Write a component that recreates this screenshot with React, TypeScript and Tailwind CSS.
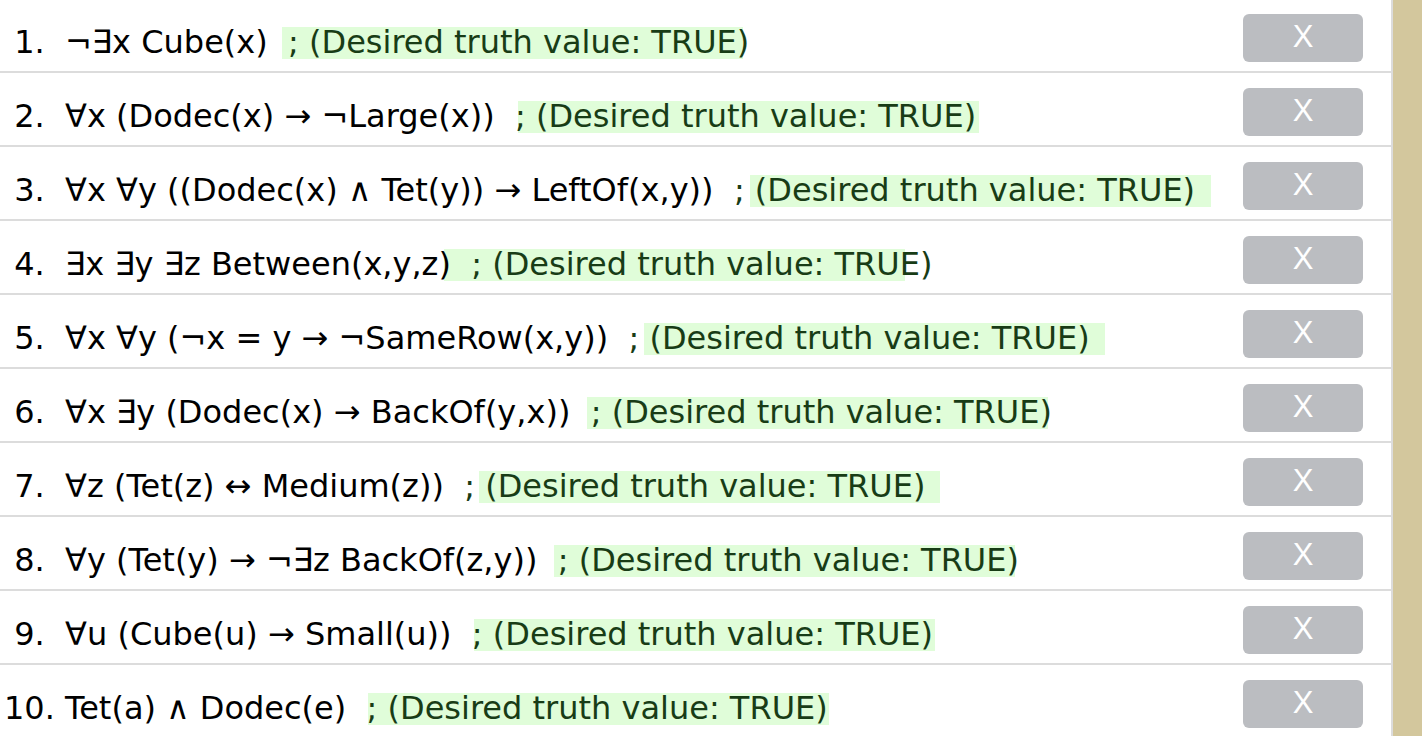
import React from "react";

type Sentence = {
  formula: string;
  hl: string;
};

const sentences: Sentence[] = [
  { formula: "¬∃x Cube(x)", hl: "left-[282px]" },
  { formula: "∀x (Dodec(x) → ¬Large(x))", hl: "left-[518px]" },
  { formula: "∀x ∀y ((Dodec(x) ∧ Tet(y)) → LeftOf(x,y))", hl: "left-[750px]" },
  { formula: "∃x ∃y ∃z Between(x,y,z)", hl: "left-[444px]" },
  { formula: "∀x ∀y (¬x = y → ¬SameRow(x,y))", hl: "left-[644px]" },
  { formula: "∀x ∃y (Dodec(x) → BackOf(y,x))", hl: "left-[587px]" },
  { formula: "∀z (Tet(z) ↔ Medium(z))", hl: "left-[479px]" },
  { formula: "∀y (Tet(y) → ¬∃z BackOf(z,y))", hl: "left-[554px]" },
  { formula: "∀u (Cube(u) → Small(u))", hl: "left-[474px]" },
  { formula: "Tet(a) ∧ Dodec(e)", hl: "left-[368px]" },
];

function SentenceRow({ index, sentence }: { index: number; sentence: Sentence }) {
  const n = index + 1;
  // single digits get a leading pad and an extra space so formulas line up
  const label = n < 10 ? ` ${n}.  ` : `${n}. `;
  return (
    <div className="relative flex h-[74px] border-b-2 border-[#dcdcdc]">
      <div className={`absolute top-[28px] h-[32px] w-[461px] bg-[#e0fdd9] ${sentence.hl}`} />
      <div className="relative flex-1 whitespace-pre pl-[4px] pt-[27px] text-[32px] leading-[32px] text-black">
        {`${label}${sentence.formula}  `}
        <span className="text-[#183c16]">; (Desired truth value: TRUE)</span>
      </div>
      <button
        type="button"
        className="mr-[28px] mt-[15px] flex h-[48px] w-[120px] items-center justify-center rounded-[6px] bg-[#bbbdc1] pb-[2px] text-[31px] text-white"
        style={{ fontFamily: "'Liberation Sans', Arial, sans-serif" }}
      >
        X
      </button>
    </div>
  );
}

export default function App() {
  return (
    <div
      className="flex h-[736px] w-full overflow-hidden bg-white"
      style={{ fontFamily: "'DejaVu Sans', Verdana, sans-serif" }}
    >
      <div className="-mt-px w-[1391px] shrink-0">
        {sentences.map((s, i) => (
          <SentenceRow key={i} index={i} sentence={s} />
        ))}
      </div>
      <div className="w-[2px] shrink-0 bg-[#dcdcdc]" />
      <div className="flex-1 bg-[#d3c79d]" />
    </div>
  );
}
